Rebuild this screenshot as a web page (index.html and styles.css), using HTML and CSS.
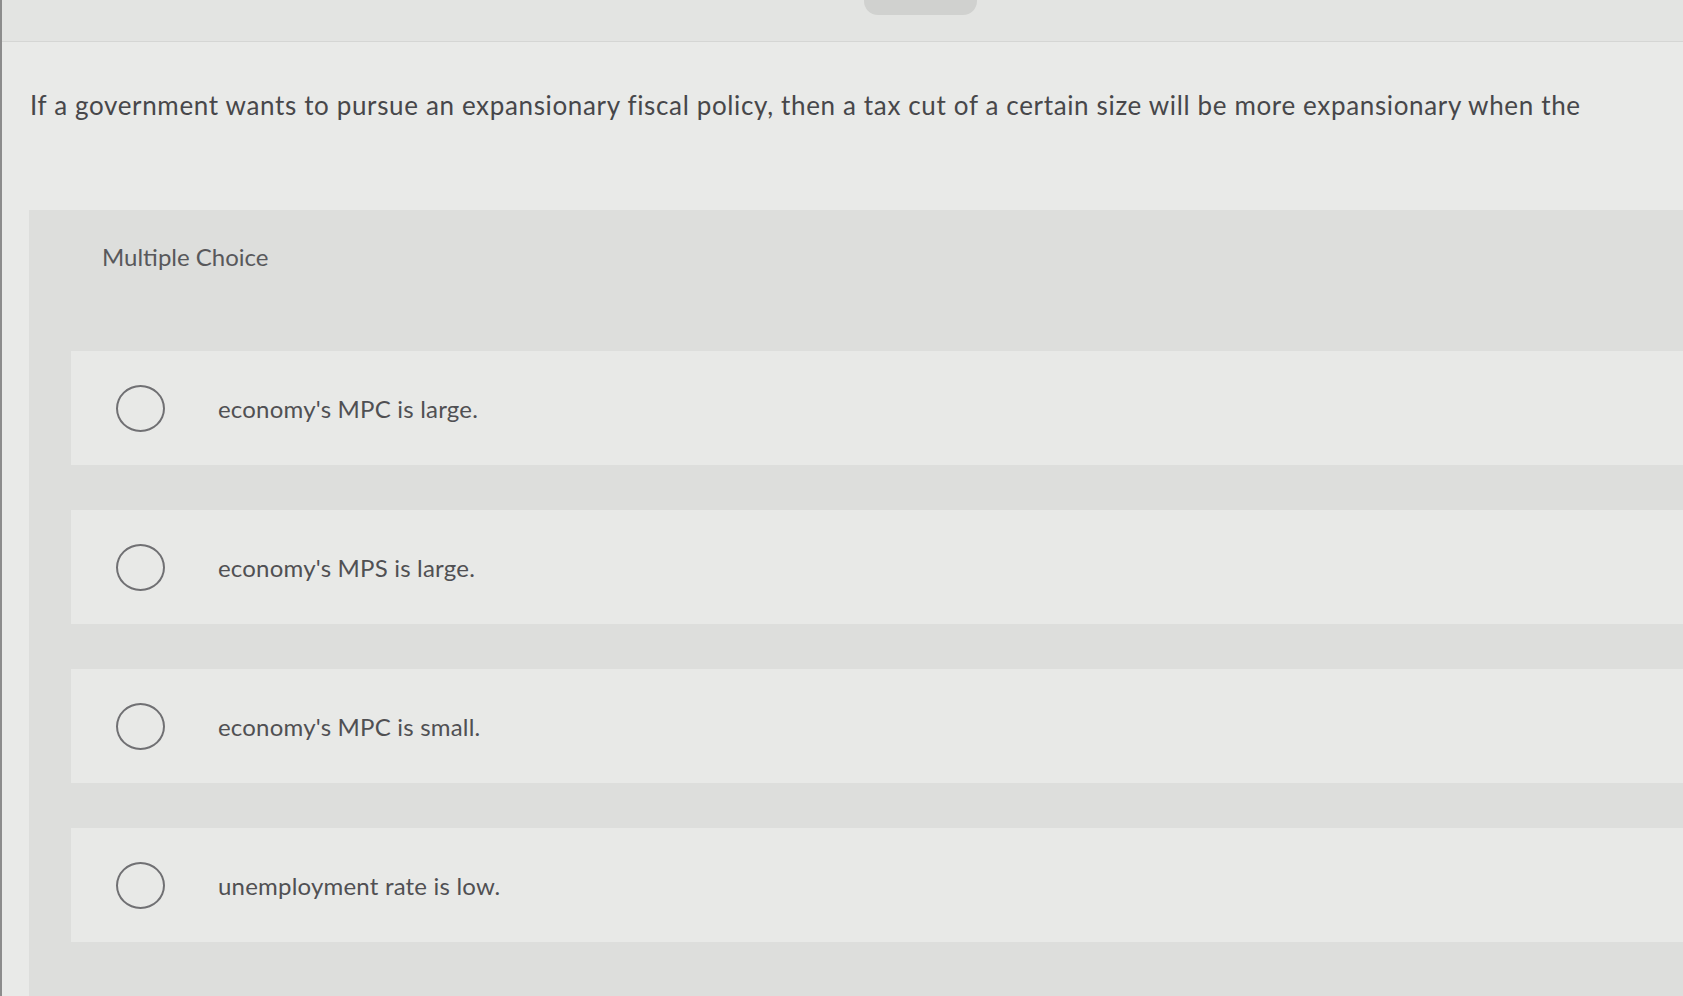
FILE: index.html
```html
<!DOCTYPE html>
<html lang="en">
<head>
<meta charset="utf-8">
<title>Multiple Choice</title>
<link rel="stylesheet" href="styles.css">
</head>
<body>
<div class="page">
  <header class="topbar">
    <div class="tab"></div>
  </header>
  <main class="content">
    <p class="question">If a government wants to pursue an expansionary fiscal policy, then a tax cut of a certain size will be more expansionary when the</p>
    <section class="panel">
      <div class="panel-label">Multiple Choice</div>
      <ul class="options">
        <li class="option"><span class="radio"></span><span class="option-text">economy's MPC is large.</span></li>
        <li class="option"><span class="radio"></span><span class="option-text">economy's MPS is large.</span></li>
        <li class="option"><span class="radio"></span><span class="option-text">economy's MPC is small.</span></li>
        <li class="option"><span class="radio"></span><span class="option-text">unemployment rate is low.</span></li>
      </ul>
    </section>
  </main>
</div>
</body>
</html>
```
FILE: styles.css
```css
* { box-sizing: border-box; }
html, body {
  margin: 0;
  padding: 0;
  height: 100%;
  overflow: hidden;
  background: #e9eae8;
  font-family: "Lato", "Liberation Sans", sans-serif;
}
.page {
  height: 996px;
  border-left: 2px solid #8c8c8c;
  display: flex;
  flex-direction: column;
}
.topbar {
  height: 42px;
  background: #e3e4e2;
  border-bottom: 1px solid #d5d6d4;
  display: flex;
  flex-shrink: 0;
}
.tab {
  margin-left: 862px;
  width: 113px;
  height: 15px;
  background: #d0d1cf;
  border-radius: 0 0 14px 14px;
}
.content {
  flex: 1;
  display: flex;
  flex-direction: column;
}
.question {
  margin: 0;
  padding: 47px 0 0 28px;
  height: 168px;
  font-size: 26px;
  line-height: 32px;
  color: #47474a;
  letter-spacing: 0.65px;
  white-space: nowrap;
}
.panel {
  margin-left: 27px;
  flex: 1;
  background: #dddedc;
  padding-top: 32px;
}
.panel-label {
  padding-left: 73px;
  font-size: 24px;
  line-height: 30px;
  color: #58585b;
}
.options {
  list-style: none;
  margin: 79px 0 0 0;
  padding: 0 0 0 42px;
  display: flex;
  flex-direction: column;
  gap: 45px;
}
.option {
  height: 114px;
  background: #e8e9e7;
  display: flex;
  align-items: center;
  padding-left: 45px;
}
.radio {
  width: 49px;
  height: 47px;
  border: 2px solid #707073;
  border-radius: 50%;
  flex-shrink: 0;
}
.option-text {
  margin-left: 53px;
  font-size: 24px;
  letter-spacing: 0.2px;
  color: #505053;
}
```
